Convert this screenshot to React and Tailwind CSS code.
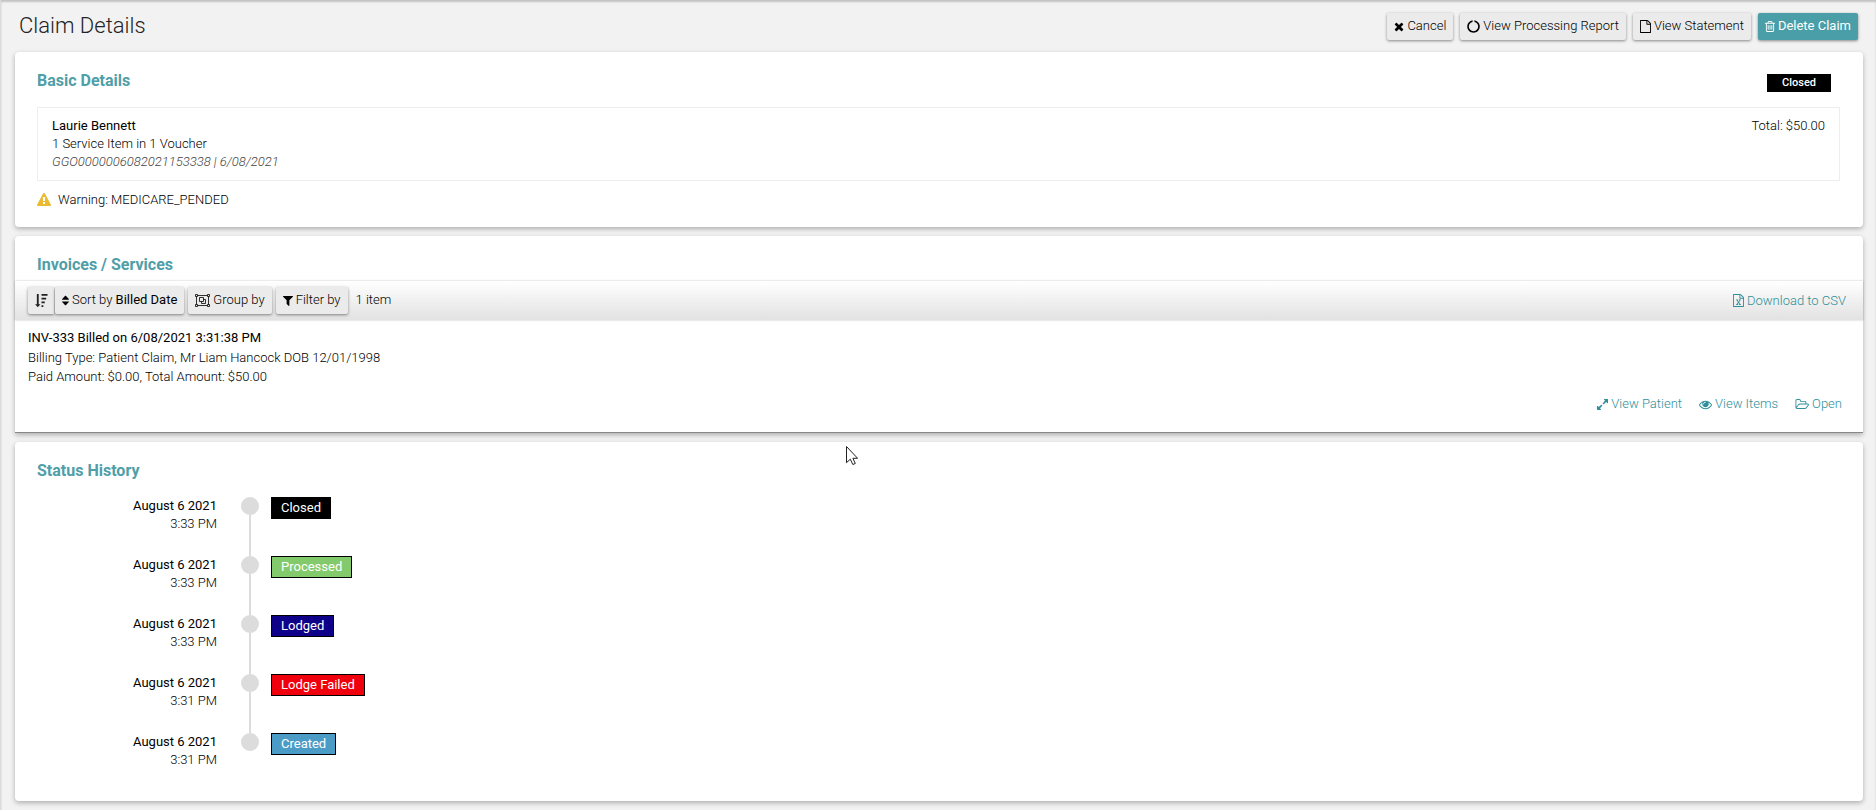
import React from "react";

const GLYPHS = {
  times:
    "M1490 1322q0 40-28 68l-136 136q-28 28-68 28t-68-28l-294-294-294 294q-28 28-68 28t-68-28l-136-136q-28-28-28-68t28-68l294-294-294-294q-28-28-28-68t28-68l136-136q28-28 68-28t68 28l294 294 294-294q28-28 68-28t68 28l136 136q28 28 28 68t-28 68l-294 294 294 294q28 28 28 68z",
  notch:
    "M1760 896q0 176-68.5 336t-184 275.5-275.5 184-336 68.5-336-68.5-275.5-184-184-275.5-68.5-336q0-213 97-398.5t265-305.5 374-151v228q-221 45-366.5 221t-145.5 406q0 130 51 248.5t136.5 204 204 136.5 248.5 51 248.5-51 204-136.5 136.5-204 51-248.5q0-230-145.5-406t-366.5-221v-228q206 31 374 151t265 305.5 97 398.5z",
  file: "M1596 380q28 28 48 76t20 88v1152q0 40-28 68t-68 28h-1344q-40 0-68-28t-28-68v-1600q0-40 28-68t68-28h896q40 0 88 20t76 48zm-444-244v376h376q-10-29-22-41l-313-313q-12-12-41-22zm384 1528v-1024h-416q-40 0-68-28t-28-68v-416h-768v1536h1280z",
  excel:
    "M1596 380q28 28 48 76t20 88v1152q0 40-28 68t-68 28h-1344q-40 0-68-28t-28-68v-1600q0-40 28-68t68-28h896q40 0 88 20t76 48zm-444-244v376h376q-10-29-22-41l-313-313q-12-12-41-22zm384 1528v-1024h-416q-40 0-68-28t-28-68v-416h-768v1536h1280zm-979-234v106h281v-106h-75l103-161q5-7 10-16.5t7.5-13.5 3.5-4h2q1 4 5 10 2 4 4.5 7.5t6 8 6.5 8.5l107 161h-76v106h291v-106h-68l-192-273 195-282h67v-107h-279v107h74l-103 159q-4 7-10 16.5t-9 13.5l-2 3h-2q-1-4-5-10-6-11-17-23l-106-159h76v-107h-290v107h68l189 272-194 283h-68z",
  trash:
    "M704 736v576q0 14-9 23t-23 9h-64q-14 0-23-9t-9-23v-576q0-14 9-23t23-9h64q14 0 23 9t9 23zm256 0v576q0 14-9 23t-23 9h-64q-14 0-23-9t-9-23v-576q0-14 9-23t23-9h64q14 0 23 9t9 23zm256 0v576q0 14-9 23t-23 9h-64q-14 0-23-9t-9-23v-576q0-14 9-23t23-9h64q14 0 23 9t9 23zm128 724v-948h-896v948q0 22 7 40.5t14.5 27 10.5 8.5h832q3 0 10.5-8.5t14.5-27 7-40.5zm-672-1076h448l-48-117q-7-9-17-11h-317q-10 2-17 11zm928 32v64q0 14-9 23t-23 9h-96v948q0 83-47 143.5t-113 60.5h-832q-66 0-113-58.5t-47-141.5v-952h-96q-14 0-23-9t-9-23v-64q0-14 9-23t23-9h309l70-167q15-37 54-63t79-26h320q40 0 79 26t54 63l70 167h309q14 0 23 9t9 23z",
  sortDesc:
    "M736 1440q0 12-10 24l-319 319q-10 9-23 9-12 0-23-9l-320-320q-15-16-7-35 8-20 30-20h192v-1376q0-14 9-23t23-9h192q14 0 23 9t9 23v1376h192q14 0 23 9t9 23zM896 0h832v256h-832zM896 512h640v256h-640zM896 1024h448v256h-448zM896 1536h256v256h-256z",
  sort: "M1408 1088q0 26-19 45l-448 448q-19 19-45 19t-45-19l-448-448q-19-19-19-45t19-45 45-19h896q26 0 45 19t19 45zm0-384q0 26-19 45t-45 19h-896q-26 0-45-19t-19-45 19-45l448-448q19-19 45-19t45 19l448 448q19 19 19 45z",
  filter:
    "M1595 295q17 41-14 70l-493 493v742q0 42-39 59-13 5-25 5-27 0-45-19l-256-256q-19-19-19-45v-486l-493-493q-31-29-14-70 17-39 59-39h1280q42 0 59 39z",
  eye: "M1664 960q-152-236-381-353 61 104 61 225 0 185-131.5 316.5t-316.5 131.5-316.5-131.5-131.5-316.5q0-121 61-225-229 117-381 353 133 205 333.5 326.5t434.5 121.5 434.5-121.5 333.5-326.5zm-720-384q0-20-14-34t-34-14q-125 0-214.5 89.5t-89.5 214.5q0 20 14 34t34 14 34-14 14-34q0-86 61-147t147-61q20 0 34-14t14-34zm848 384q0 34-20 69-140 230-376.5 368.5t-499.5 138.5-499.5-139-376.5-368q-20-35-20-69t20-69q140-229 376.5-368t499.5-139 499.5 139 376.5 368q20 35 20 69z",
  expand:
    "M883 1056q0 13-10 23l-332 332 144 144q19 19 19 45t-19 45-45 19h-448q-26 0-45-19t-19-45v-448q0-26 19-45t45-19 45 19l144 144 332-332q10-10 23-10t23 10l114 114q10 10 10 23zm781-864v448q0 26-19 45t-45 19-45-19l-144-144-332 332q-10 10-23 10t-23-10l-114-114q-10-10-10-23t10-23l332-332-144-144q-19-19-19-45t19-45 45-19h448q26 0 45 19t19 45z",
  folder:
    "M1845 931q0-35-53-35h-1088q-40 0-85.5 21.5t-71.5 52.5l-294 363q-18 24-18 40 0 35 53 35h1088q40 0 86-22t71-53l294-363q18-22 18-39zm-1141-163h768v-160q0-40-28-68t-68-28h-576q-40 0-68-28t-28-68v-64q0-40-28-68t-68-28h-320q-40 0-68 28t-28 68v853l256-315q44-53 116-87.5t140-34.5zm1269 163q0 62-46 120l-295 363q-43 53-116 87.5t-140 34.5h-1088q-92 0-158-66t-66-158v-960q0-92 66-158t158-66h320q92 0 158 66t66 158v32h544q92 0 158 66t66 158v160h192q54 0 99 24.5t67 70.5q15 32 15 68z",
  warning:
    "M1024 1375v-190q0-14-9.5-23.5t-22.5-9.5h-192q-13 0-22.5 9.5t-9.5 23.5v190q0 14 9.5 23.5t22.5 9.5h192q13 0 22.5-9.5t9.5-23.5zm-2-374l18-459q0-12-10-19-13-11-24-11h-220q-11 0-24 11-10 7-10 21l17 457q0 10 10 16.5t24 6.5h185q14 0 23.5-6.5t10.5-16.5zm-14-934l768 1408q35 63-2 126-17 29-46.5 46t-63.5 17h-1536q-34 0-63.5-17t-46.5-46q-37-63-2-126l768-1408q17-31 47-49t65-18 65 18 47 49z",
};

function Glyph({ name, box = "0 0 1792 1792", className = "size-[13px]" }) {
  return (
    <svg viewBox={box} fill="currentColor" aria-hidden="true" className={`shrink-0 ${className}`}>
      <path d={GLYPHS[name]} />
    </svg>
  );
}

function GroupGlyph() {
  return (
    <svg viewBox="0 0 15 13" fill="none" stroke="currentColor" aria-hidden="true" className="h-[13px] w-[15px] shrink-0">
      <path d="M1.5 1.5h12v10h-12z" strokeWidth="0.8" />
      <path d="M4.500 3.500h4v4h-4zM8.500 5.500h2v4h-4v-2" strokeWidth="0.8" />
      <path
        d="M0.500 0.500h2v2h-2zM12.500 0.500h2v2h-2zM0.500 10.500h2v2h-2zM12.500 10.500h2v2h-2z"
        fill="#ebebeb"
        strokeWidth="0.8"
      />
    </svg>
  );
}

function Button({ children, primary }) {
  const tone = primary ? "bg-[#4a9ea8] font-normal text-white" : "bg-[#ebebeb] text-black";
  return (
    <button
      type="button"
      className={`flex h-[27px] items-center gap-[3px] rounded-[2px] px-[7px] whitespace-nowrap shadow-[0_1px_3px_rgba(0,0,0,0.45)] ${tone}`}
    >
      {children}
    </button>
  );
}

function TextLink({ children }) {
  return (
    <a href="#" className="flex items-center gap-[3px] whitespace-nowrap text-[#2f8f9a]">
      {children}
    </a>
  );
}

function Card({ children, className = "" }) {
  return <section className={`bg-white shadow-[0_2px_5px_rgba(0,0,0,0.28)] ${className}`}>{children}</section>;
}

function Heading({ children }) {
  return <h2 className="text-base leading-5 font-bold text-[#4f9ea8]">{children}</h2>;
}

const HISTORY = [
  { time: "3:33 PM", status: "Closed", tone: "bg-black" },
  { time: "3:33 PM", status: "Processed", tone: "bg-[#82ca6c]" },
  { time: "3:33 PM", status: "Lodged", tone: "bg-[#0f008a]" },
  { time: "3:31 PM", status: "Lodge Failed", tone: "bg-[#f0000c]" },
  { time: "3:31 PM", status: "Created", tone: "bg-[#4a9cc7]" },
];

export default function App() {
  return (
    <div className="min-h-screen border-l border-[#dcdcdc] bg-[#f2f2f2] font-[Roboto,sans-serif] text-[13px] leading-[18px] font-light text-black shadow-[inset_0_2px_2px_rgba(0,0,0,0.2)]">
      <header className="flex h-[52px] items-center justify-between pr-[18px] pl-[18px]">
        <h1 className="text-[22px] leading-7 text-[#222]">Claim Details</h1>
        <div className="flex gap-[7px]">
          <Button>
            <Glyph name="times" box="192 0 1408 1792" className="h-[13px] w-[10px]" />
            Cancel
          </Button>
          <Button>
            <Glyph name="notch" />
            View Processing Report
          </Button>
          <Button>
            <Glyph name="file" box="128 0 1536 1792" className="h-[13px] w-[11px]" />
            View Statement
          </Button>
          <Button primary>
            <Glyph name="trash" box="192 0 1408 1792" className="h-[13px] w-[10px]" />
            Delete Claim
          </Button>
        </div>
      </header>

      <main className="flex flex-col gap-[9px] pr-[13px] pb-[9px] pl-[14px]">
        <Card className="rounded-[4px] py-[18px] pr-[23px] pl-[22px]">
          <div className="flex h-[22px] items-center justify-between pr-[9px]">
            <Heading>Basic Details</Heading>
            <span className="mt-1 bg-black px-[15px] pb-px text-[11px] leading-[17px] font-medium text-white">
              Closed
            </span>
          </div>
          <div className="mt-[15px] flex justify-between border border-[#eee] px-[14px] py-[9px]">
            <div>
              <p className="font-normal">Laurie Bennett</p>
              <p>1 Service Item in 1 Voucher</p>
              <p className="text-[#444] italic">GGO0000006082021153338 | 6/08/2021</p>
            </div>
            <p>Total: $50.00</p>
          </div>
          <div className="mt-[10px] flex items-center gap-[7px]">
            <Glyph name="warning" className="size-[14px] text-[#eabb30]" />
            Warning: MEDICARE_PENDED
          </div>
        </Card>

        <Card className="rounded-t-[4px] border-b border-[#888]">
          <div className="px-[22px] pt-[19px] pb-[6px]">
            <Heading>Invoices / Services</Heading>
          </div>
          <div className="flex h-[39px] items-center justify-between bg-linear-to-b from-white to-[#e2e2e2] pr-[17px] pl-[13px] shadow-[0_0_2px_rgba(0,0,0,0.25)]">
            <div className="flex items-center gap-1 pb-px">
              <div className="flex gap-px">
                <button
                  type="button"
                  aria-label="Sort direction"
                  className="flex h-[27px] w-[26px] items-center justify-center rounded-l-[2px] bg-[#ebebeb] text-[#222] shadow-[0_1px_3px_rgba(0,0,0,0.45)]"
                >
                  <Glyph name="sortDesc" />
                </button>
                <Button>
                  <Glyph name="sort" box="384 0 1024 1792" className="h-[13px] w-[7px]" />
                  <span>
                    Sort by <span className="font-normal">Billed Date</span>
                  </span>
                </Button>
              </div>
              <Button>
                <GroupGlyph />
                Group by
              </Button>
              <Button>
                <Glyph name="filter" box="192 0 1408 1792" className="h-[13px] w-[10px]" />
                Filter by
              </Button>
              <span className="pb-px pl-1">1 item</span>
            </div>
            <TextLink>
              <Glyph name="excel" box="128 0 1536 1792" className="h-[13px] w-[11px]" />
              Download to CSV
            </TextLink>
          </div>
          <div className="px-[13px] pt-2 leading-[19px]">
            <p className="mb-px font-normal">INV-333 Billed on 6/08/2021 3:31:38 PM</p>
            <p>Billing Type: Patient Claim, Mr Liam Hancock DOB 12/01/1998</p>
            <p>Paid Amount: $0.00, Total Amount: $50.00</p>
          </div>
          <div className="flex justify-end gap-[17px] pt-[9px] pr-[21px] pb-[19px]">
            <TextLink>
              <Glyph name="expand" box="128 0 1536 1792" className="h-[13px] w-[11px]" />
              View Patient
            </TextLink>
            <TextLink>
              <Glyph name="eye" />
              View Items
            </TextLink>
            <TextLink>
              <Glyph name="folder" box="0 0 1984 1792" className="h-[13px] w-[14px]" />
              Open
            </TextLink>
          </div>
        </Card>

        <Card className="rounded-[4px] px-[22px] pt-[19px] pb-[9px]">
          <Heading>Status History</Heading>
          <ol className="mt-4">
            {HISTORY.map((entry, i) => (
              <li key={i} className="flex h-[59px]">
                <div className="w-[180px] text-right">
                  <p className="font-normal">August 6 2021</p>
                  <p>{entry.time}</p>
                </div>
                <div className="ml-6 flex w-[18px] flex-col items-center">
                  <span className="size-[18px] shrink-0 rounded-full bg-[#dcdcdc]" />
                  {i < HISTORY.length - 1 && <span className="w-[2px] grow bg-[#dcdcdc]" />}
                </div>
                <div className="ml-3">
                  <span className={`block border border-black px-[9px] leading-5 font-normal text-white ${entry.tone}`}>
                    {entry.status}
                  </span>
                </div>
              </li>
            ))}
          </ol>
        </Card>
      </main>

      <svg
        viewBox="0 0 12 19"
        aria-hidden="true"
        className="pointer-events-none absolute top-[446px] left-[846px] h-[19px] w-[12px]"
      >
        <path d="M0.5 0.5v16.200l3.800-3.500 2.500 5.300 2.500-1-2.400-5.200h4.700z" fill="#fff" stroke="#222" />
      </svg>
    </div>
  );
}
